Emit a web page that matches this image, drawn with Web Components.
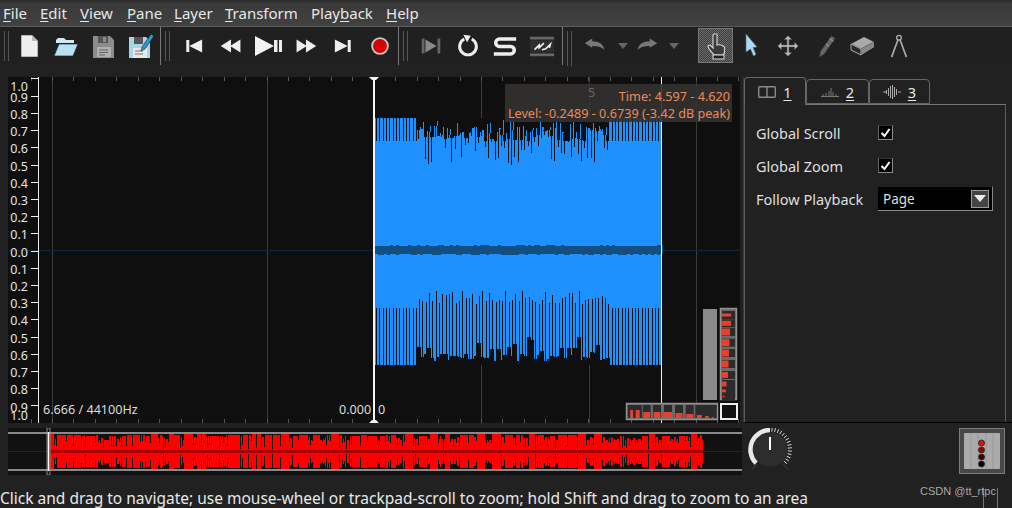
<!DOCTYPE html>
<html><head><meta charset="utf-8"><style>
html,body{margin:0;padding:0;background:#212121;width:1012px;height:508px;overflow:hidden}
body{font-family:"Noto Sans","Open Sans",sans-serif;color:#e6e6e6}
sv-app{display:flex}
</style></head><body>
<sv-app>
  <sv-menubar>
    <sv-menu style="--w:37px" key="F" rest="ile"></sv-menu><sv-menu style="--w:40px" key="E" rest="dit"></sv-menu><sv-menu style="--w:47px" key="V" rest="iew"></sv-menu><sv-menu style="--w:47px" key="P" rest="ane"></sv-menu><sv-menu style="--w:51px" key="L" rest="ayer"></sv-menu><sv-menu style="--w:86px" key="T" rest="ransform"></sv-menu><sv-menu style="--w:75px" pre="Play" key="b" rest="ack"></sv-menu><sv-menu style="--w:40px" key="H" rest="elp"></sv-menu>
  </sv-menubar>
  <sv-toolbar></sv-toolbar>
  <sv-main>
    <sv-pane></sv-pane>
    <sv-props></sv-props>
  </sv-main>
  <sv-bottom>
    <sv-overview></sv-overview>
    <sv-dial></sv-dial>
    <sv-leds></sv-leds>
  </sv-bottom>
  <sv-status>Click and drag to navigate; use mouse-wheel or trackpad-scroll to zoom; hold Shift and drag to zoom to an area</sv-status>
</sv-app>
<script>
function rng(s){return function(){s=(s*1664525+1013904223)>>>0;return s/4294967296}}
function def(name,html,init){
  customElements.define(name,class extends HTMLElement{
    constructor(){super();const r=this.attachShadow({mode:"open"});r.innerHTML=typeof html==="function"?html(this):html;}
    connectedCallback(){ if(init&&!this._i){this._i=1;init(this)} }
  });
}
def("sv-app",`<style>:host{display:flex;flex-direction:column;width:1012px;height:508px;overflow:hidden;background:#212121;position:relative}
.wm{position:absolute;left:920px;top:485px;font:11px "Liberation Sans",sans-serif;color:#a8a8a8}
.c{position:absolute;left:983px;top:488px;width:13px;height:20px;border-left:1px solid #777;border-right:1px solid #777}
</style><slot></slot><div class="c"></div><div class="wm">CSDN @tt_rtpc</div>`);

def("sv-menubar",`<style>:host{display:flex;height:26px;padding-left:3px;background:linear-gradient(#2b2b2b 0,#3a3a3a 4px,#414141 100%);box-sizing:border-box;align-items:center;flex:none}</style><slot></slot>`);
def("sv-menu",el=>`<style>:host{display:block;width:var(--w);font-size:15px;line-height:26px;color:#e8e8e8;white-space:nowrap}u{text-underline-offset:2px}</style>${el.getAttribute("pre")||""}<u>${el.getAttribute("key")}</u>${el.getAttribute("rest")}`);

const ICONS={
 new:`<path d="M6 3h11l6 6v16H6z" fill="#eee" stroke="#333" stroke-width=".6"/><path d="M17 3v6h6z" fill="#bbb"/>`,
 open:`<path d="M4 8l2-2h6l2 2h8v3H4z" fill="#cfe9f5"/><path d="M7 12h19l-5 12H2z" fill="#b8e2f2" stroke="#222" stroke-width=".7"/>`,
 save:`<path d="M4 4h17l4 4v18H4z" fill="#8c8c8c"/><rect x="9" y="4" width="10" height="7" fill="#555"/><rect x="14" y="5" width="3" height="5" fill="#8c8c8c"/><rect x="8" y="15" width="14" height="10" fill="#b0b0b0"/><path d="M10 18h9M10 20.500h9M10 23h6" stroke="#666"/>`,
 saveas:`<path d="M3 5h17l4 4v17H3z" fill="#a9d5e8"/><rect x="8" y="5" width="9" height="7" fill="#555"/><rect x="7" y="16" width="14" height="10" fill="#e8e8e8"/><path d="M9 19h8M9 22h8" stroke="#777"/><path d="M25 2l3 2-9 13-4 2 1-4z" fill="#2d98c8" stroke="#111" stroke-width=".5"/>`,
 first:`<rect x="5" y="7" width="3.500" height="14" fill="#eee"/><path d="M8.500 14l15-7.500v15z" fill="#eee"/>`,
 rew:`<path d="M2 14l12-7.500v15z M13 14l12-7.500v15z" fill="#eee"/>`,
 play:`<path d="M1 4l19 10L1 24z" fill="#f2f2f2"/><rect x="20" y="8" width="3.500" height="12" fill="#eee"/><rect x="25" y="8" width="3.500" height="12" fill="#eee"/>`,
 ffw:`<path d="M3 6.500l12 7.500-12 7.500z M14 6.500l12 7.500-12 7.500z" fill="#eee"/>`,
 last:`<path d="M4.500 6.500l15 7.500-15 7.500z" fill="#eee"/><rect x="19.500" y="7" width="3.500" height="14" fill="#eee"/>`,
 rec:`<circle cx="14" cy="14" r="9.500" fill="#c8c8c8"/><circle cx="14" cy="14" r="7.500" fill="#d80000"/>`,
 sel:`<rect x="4" y="6" width="3" height="16" fill="#666"/><rect x="21" y="6" width="3" height="16" fill="#666"/><path d="M8 7l12 7-12 7z" fill="#8a8a8a"/>`,
 loop:`<path d="M10 6.500a9 9 0 1 0 8 0" fill="none" stroke="#eee" stroke-width="3.200"/><path d="M9 2l8 1-4 7z" fill="#eee"/>`,
 solo:`<path d="M26 6.500H8a3.500 3.500 0 0 0 0 8h12a3.500 3.500 0 0 1 0 8H2" fill="none" stroke="#eee" stroke-width="3.800"/>`,
 align:`<rect x="1" y="4" width="26" height="3" fill="#666"/><rect x="1" y="22" width="26" height="3" fill="#666"/><rect x="1" y="8" width="26" height="13" fill="#2e2e2e"/><path d="M6 18l5-5v3l5-5M14 18l4-1 5-5-1 4" fill="none" stroke="#eee" stroke-width="1.800"/>`,
 undo:`<path d="M3 11l8-5v3c7 0 12 3 13 9-3-3-7-4-13-4v2z" fill="#777"/>`,
 redo:`<path d="M25 11l-8-5v3C10 9 5 12 4 18c3-3 7-4 13-4v2z" fill="#777"/>`,
 nav:`<path d="M12 2h3v11l2-.5 2 .5 2 1 1.500 1v6l-2 2H12l-5-6-1-3 2-1 3 3V3z" fill="#3a3a3a" stroke="#ccc" stroke-width="1.200"/><rect x="11" y="23" width="11" height="4" fill="#222" stroke="#ddd"/>`,
 select:`<path d="M9 2l11 13-4 .5 3 7-2.500 1.500-3-7L9 20z" fill="#a8dbef" stroke="#666" stroke-width=".6"/>`,
 move:`<path d="M14 3l4 4h-3v6h6v-3l4 4-4 4v-3h-6v6h3l-4 4-4-4h3v-6H7v3l-4-4 4-4v3h6V7h-3z" fill="#bdbdbd" stroke="#555" stroke-width=".5"/>`,
 draw:`<path d="M21 3l4 3-12 17-5 3 1-6z" fill="#666" stroke="#333" stroke-width=".6"/><path d="M19 6l4 3M15 12l3 2" stroke="#aaa"/>`,
 erase:`<path d="M3 12L16 5l10 5v5L13 23 3 18z" fill="#aaa"/><path d="M3 12l10 5 13-7M13 17v6" fill="none" stroke="#444"/><path d="M3 12v6l10 5v-6z" fill="#2a2a2a" stroke="#aaa"/><path d="M13 17L26 10v5L13 23z" fill="#888"/>`,
 measure:`<circle cx="14" cy="5" r="2.500" fill="none" stroke="#aaa" stroke-width="1.500"/><path d="M13 7L6 26M15 7l7 19" stroke="#aaa" stroke-width="1.800" fill="none"/>`
};
def("sv-icon",el=>{const s=el.getAttribute("size")||28;return `<style>:host{display:block;line-height:0}</style><svg width="${s}" height="${s}" viewBox="0 0 28 28">${ICONS[el.getAttribute("name")]}</svg>`});
def("sv-tool",el=>{const a=el.hasAttribute("active");return `<style>:host{display:flex;flex:none;width:${el.getAttribute("w")||37}px;height:35px;align-items:center;justify-content:center;box-sizing:border-box;${a?"background:repeating-conic-gradient(#3d3d3d 0 25%,#6a6a6a 0 50%) 0 0/2px 2px;border:1px solid #777;":""}}</style><slot></slot>`});
def("sv-dd",`<style>:host{display:flex;flex:none;width:13px;height:35px;align-items:center;justify-content:center}i{border:5.500px solid transparent;border-top:6px solid #666;border-bottom:0}</style><i></i>`);
def("sv-tgroup",`<style>:host{display:flex;flex:none;box-sizing:border-box;height:39px;padding:1px 0 0 var(--pad,13px);border-top:1px solid #5c5c5c;border-right:1px solid #777;position:relative}
.h{position:absolute;left:4px;top:4px;bottom:4px;width:3px;border-left:1px solid #555;border-right:1px solid #555}</style><div class="h"></div><slot></slot>`);
def("sv-toolbar",`<style>:host{display:flex;flex:none;height:39px;margin-bottom:12px;background:#202020}
.rest{flex:1;border-top:1px solid #5c5c5c}</style>
<sv-tgroup style="width:161px;--pad:10px">
 <sv-tool><sv-icon name="new"></sv-icon></sv-tool><sv-tool><sv-icon name="open"></sv-icon></sv-tool><sv-tool><sv-icon name="save"></sv-icon></sv-tool><sv-tool><sv-icon name="saveas"></sv-icon></sv-tool>
</sv-tgroup>
<sv-tgroup style="width:238px;--pad:14px">
 <sv-tool><sv-icon name="first" size="24"></sv-icon></sv-tool><sv-tool><sv-icon name="rew" size="24"></sv-icon></sv-tool><sv-tool w="38"><sv-icon name="play"></sv-icon></sv-tool><sv-tool><sv-icon name="ffw" size="24"></sv-icon></sv-tool><sv-tool><sv-icon name="last" size="24"></sv-icon></sv-tool><sv-tool><sv-icon name="rec" size="26"></sv-icon></sv-tool>
</sv-tgroup>
<sv-tgroup style="width:164px;--pad:13px">
 <sv-tool><sv-icon name="sel" size="26"></sv-icon></sv-tool><sv-tool><sv-icon name="loop" size="26"></sv-icon></sv-tool><sv-tool><sv-icon name="solo" size="26"></sv-icon></sv-tool><sv-tool><sv-icon name="align" size="26"></sv-icon></sv-tool>
</sv-tgroup>
<div class="rest"><sv-tgroup-inner></sv-tgroup-inner></div>`);
def("sv-tgroup-inner",`<style>:host{display:flex;position:relative;padding:1px 0 0 14px;height:35px}
.h{position:absolute;left:4px;top:4px;bottom:-3px;width:3px;border-left:1px solid #555;border-right:1px solid #555}
sv-tool+sv-dd{margin-left:3px}</style><div class="h"></div>
<sv-tool w="36"><sv-icon name="undo" size="26"></sv-icon></sv-tool><sv-dd></sv-dd><sv-tool w="35"><sv-icon name="redo" size="26"></sv-icon></sv-tool><sv-dd></sv-dd>
<sv-tool w="35" active style="margin-left:18px"><sv-icon name="nav"></sv-icon></sv-tool>
<sv-tool w="36"><sv-icon name="select"></sv-icon></sv-tool><sv-tool><sv-icon name="move" size="26"></sv-icon></sv-tool><sv-tool><sv-icon name="draw" size="26"></sv-icon></sv-tool><sv-tool w="38"><sv-icon name="erase"></sv-icon></sv-tool><sv-tool w="36"><sv-icon name="measure" size="26"></sv-icon></sv-tool>`);

def("sv-main",`<style>:host{display:flex;flex:none;height:346px;padding-left:8px;gap:3px}</style><slot></slot>`);

function buildWave(){
  const r=rng(77);let s="";
  const tick=(x,y1,y2,c)=>`<path d="M${x}.5 ${y1}V${y2}" stroke="${c}"/>`;
  [52,267,481,589,696].forEach(x=>s+=tick(x,77,423,"#3c3c3c"));
  for(let i=-1;i<33;i++){const x=Math.round(30.5+i*21.45+21.5);if(x<31||x>738)continue;s+=tick(x,77,81,"#555")+tick(x,419,423,"#555")}
  s+=`<path d="M9 250.500H740" stroke="#10243a"/>`;
  s+=`<rect x="375" y="118" width="286" height="247" fill="#1e90ff"/>`;
  let dk="";
  const bg="#0f0f0f";
  let tops="";
  for(let x=375;x<661;x+=3.32){
    const xx=Math.round(x)+1, mid=x>417&&x<608;
    if(!mid){dk+=`M${xx}.5 118V141`;}
    else{
      const top=126+Math.floor(r()*16);
      s+=`<rect x="${xx-2}" y="118" width="4" height="${top-118}" fill="${bg}"/>`;
      if(r()<.75){const t=120+Math.floor(r()*14);tops+=`M${xx+1}.5 ${t}V${top}`}
      const y2=r()<.4?150+r()*16:top+r()*14;
      dk+=`M${xx-1}.5 ${top}V${y2|0}`;
    }
  }
  s+=`<path d="${tops}" stroke="#1e90ff"/>`;
  for(let x=375;x<661;x+=3.32){
    const xx=Math.round(x)+1, mid=x>417&&x<608;
    if(!mid){dk+=`M${xx}.5 308V365`;}
    else{
      const q=r();const h=q<.22?16+r()*12:q<.5?8+r()*10:3+r()*6;
      s+=`<rect x="${xx-2}" y="${(365-h)|0}" width="4" height="${(h|0)+1}" fill="${bg}"/>`;
      dk+=`M${xx}.5 ${(291+r()*14)|0}V365`;
    }
  }
  s+=`<path d="${dk}" stroke="#111"/>`;
  s+=`<rect x="375" y="246" width="286" height="8" fill="#124f80"/>`;
  for(let x=375;x<661;x+=3){const a=r()<.4?1:0;s+=`<rect x="${x}" y="${246-a}" width="3" height="${8+a+(r()<.4?1:0)}" fill="#124f80"/>`}
  s+=tick(373,77,423,"#f4f4f4")+tick(374,77,423,"#f4f4f4")+tick(661,77,423,"#f4f4f4");
  s+=`<path d="M369 77h10l-3 3h-4zM369 423h10l-3-3h-4z" fill="#f4f4f4"/>`;
  s+=tick(38,77,423,"#eee");
  s+=`<path d="M31 78.500h7" stroke="#eee"/>`;
  const lab=[];
  for(let i=-9;i<=9;i++){const y=Math.round(250.5+i*17.2);s+=`<path d="M31 ${y+.5}h7" stroke="#eee"/>`;
    const v=(Math.abs(i)/10).toFixed(1);let by=y+6;if(i==-9)by=102;if(i==9)by=412;lab.push([v,by])}
  lab.push(["1.0",91],["1.0",420]);
  s+=`<g font-family="Noto Sans" font-size="12.500" fill="#e4e4e4" text-anchor="end">`+lab.map(l=>`<text x="28" y="${l[1]}">${l[0]}</text>`).join("")+`</g>`;
  return s;
}
function meterV(){
 let s=`<rect x="703" y="309" width="14" height="91" fill="#8a8a8a"/><rect x="720.500" y="308.500" width="16" height="91" fill="#6a6a6a" stroke="#909090" stroke-width="1.500"/>`;
 const ys=[315,323.3,332,342.7,353,364,375,384,391,396.700],ws=[9,9,8,7.500,7,6.500,6,4.500,4,3],hs=[3,5,7,7,7,7,6,5,3,1];
 ys.forEach((c,i)=>{s+=`<rect x="722" y="${c-4}" width="13" height="8" fill="#2b2b2b"/><rect x="722" y="${c-hs[i]/2}" width="${ws[i]}" height="${hs[i]}" fill="#e8402e"/>`});
 s+=`<rect x="626.500" y="403.500" width="91" height="16" fill="#6a6a6a" stroke="#909090" stroke-width="1.500"/>`;
 const xs=[631.7,637.7,646.7,657,668,679,689.7,699.3,707,712.700],bw=[3,4,7,7,8,7,7,5,4,2],bh=[8,8,6,6,6,5,4,3,2,1];
 xs.forEach((c,i)=>{s+=`<rect x="${c-4}" y="405" width="8" height="13" fill="#2b2b2b"/><rect x="${c-bw[i]/2}" y="${418-bh[i]}" width="${bw[i]}" height="${bh[i]}" fill="#e8402e"/>`});
 s+=`<rect x="721" y="404" width="16" height="15" fill="#111" stroke="#eee" stroke-width="2"/>`;
 return s}
def("sv-pane",`<style>:host{display:block;position:relative;flex:none;width:732px;height:346px;background:#0f0f0f;font-size:12.600px;overflow:hidden}
svg{display:block}
.t{position:absolute;white-space:nowrap;color:#dcdcdc;line-height:16px}
.tip{position:absolute;left:497px;top:7px;width:227px;height:38px;box-sizing:border-box;padding:4px 2px 0 0;background:rgba(52,50,49,.9);color:#ea8c5a;text-align:right;line-height:17px;white-space:nowrap;font-size:12.650px}
.five{position:absolute;left:580px;top:8px;color:#666}
</style><svg id="s" width="732" height="346" viewBox="8 77 732 346"></svg>
<div class="tip">Time: 4.597 - 4.620<br>Level: -0.2489 - 0.6739 (-3.42 dB peak)</div>
<div class="t five">5</div>
<div class="t" style="left:35px;top:325px">6.666 / 44100Hz</div>
<div class="t" style="left:331px;top:325px">0.000</div>
<div class="t" style="left:370px;top:325px">0</div>`,el=>{el.shadowRoot.getElementById("s").innerHTML=buildWave()+meterV()});

def("sv-check",`<style>:host{display:block;width:15px;height:15px;box-sizing:border-box;background:#000;border-right:1px solid #8a8a8a;border-bottom:1px solid #8a8a8a;border-left:1px solid #666;border-top:1px solid #333;line-height:0}</style><svg width="13" height="13" viewBox="0 0 13 13"><path d="M2.500 7l3 3 5-7" fill="none" stroke="#fff" stroke-width="2"/></svg>`);
def("sv-tab",el=>{const a=el.hasAttribute("active");return `<style>:host{display:flex;box-sizing:border-box;flex:none;width:var(--w);height:${a?28:25}px;margin-top:${a?0:2}px;${a?"margin-bottom:-1px;z-index:1;":""}align-items:center;justify-content:center;gap:7px;border:1px solid #666;border-bottom:${a?"0":"1px solid #666"};border-radius:4px 4px 0 0;background:#212121;font-size:14.500px;color:#e8e8e8;position:relative}
u{text-underline-offset:2px}svg{display:block}</style><slot></slot><u>${el.getAttribute("n")}</u>`});
def("sv-props",`<style>:host{display:block;flex:1;box-sizing:border-box;border-left:1px solid #3a3a3a;border-bottom:1px solid #000;padding-right:7px;font-size:14.500px;color:#dfdfdf}
.tabs{display:flex;height:27px;margin-left:0}
.body{box-sizing:border-box;height:318px;border:1px solid #5c5c5c;border-top:1px solid #777;border-bottom:0;padding:16px 12px 0 11px;display:grid;grid-template-columns:122px 115px;grid-auto-rows:33px;align-items:start;margin-right:0}
.l{line-height:25px;white-space:nowrap}
.ck{padding-top:4px}
.combo{box-sizing:border-box;height:25px;background:#000;display:flex;align-items:center;justify-content:space-between;padding:0 3px 0 5px;border-right:1px solid #888;border-bottom:1px solid #888;border-top:1px solid #222;margin-top:-1px;font-size:13.500px}
.btn{width:18px;height:18px;box-sizing:border-box;background:#444;border:1px solid #999;display:flex;align-items:center;justify-content:center}
.btn i{border:6px solid transparent;border-top:7px solid #eee;border-bottom:0}
</style>
<div class="tabs">
<sv-tab active n="1" style="--w:62px"><svg width="18" height="12" viewBox="0 0 18 12"><rect x=".7" y=".7" width="16.600" height="10.600" rx="1" fill="none" stroke="#8a8a8a" stroke-width="1.400"/><path d="M9 1v10" stroke="#8a8a8a" stroke-width="1.400"/></svg></sv-tab>
<sv-tab n="2" style="--w:63px"><svg width="18" height="11" viewBox="0 0 18 11"><path d="M0 10.500h18M2 10V8M5 10V7M8 10V5M10 10V2M12 10V6M15 10V8" stroke="#777" fill="none"/></svg></sv-tab>
<sv-tab n="3" style="--w:61px"><svg width="18" height="14" viewBox="0 0 18 14"><path d="M0 7h3M3.500 5v4M5.500 3v8M7.500 1v12M9.500 0v14M11.500 2v10M13.500 4v6M15 7h3" stroke="#aaa" fill="none"/></svg></sv-tab>
</div>
<div class="body">
<div class="l">Global Scroll</div><div class="ck"><sv-check></sv-check></div>
<div class="l">Global Zoom</div><div class="ck"><sv-check></sv-check></div>
<div class="l">Follow Playback</div><div class="combo"><span>Page</span><span class="btn"><i></i></span></div>
</div>`);

def("sv-bottom",`<style>:host{display:flex;flex:none;height:60px;padding:5px 7px 0 8px;box-sizing:border-box;align-items:flex-start}</style><slot></slot>`);
def("sv-overview",`<style>:host{display:block;flex:none;width:734px;height:47px;background:#111;line-height:0}</style><svg id="s" width="734" height="47" viewBox="8 428 734 47"></svg>`,el=>{
 const r=rng(19);let s=`<path d="M8 451.500H742" stroke="#7a0000"/><rect x="8" y="432" width="734" height="2" fill="#8a8a8a"/><rect x="8" y="469" width="734" height="2" fill="#8a8a8a"/>`;
 let x=50;
 while(x<703){
  const big=r()<.35;
  const w=Math.min(big?4+Math.floor(r()*6):1+Math.floor(r()*2),703-x);
  const h=big?(15+r()*3)|0:(11+r()*6)|0;
  s+=`<rect x="${x}" y="${451-h}" width="${w}" height="${h*2+1}" fill="#f00"/>`;
  x+=w;
  if(x<702&&r()<.8){const nh=r()<.5?2+(r()*5|0):8+(r()*4|0);s+=`<rect x="${x}" y="${451-nh}" width="1" height="${nh*2+1}" fill="#f00"/>`;x+=1}
 }
 s+=`<rect x="50" y="450" width="653" height="3" fill="#a80000"/>`;
 s+=`<rect x="47" y="428" width="3" height="47" fill="none" stroke="#8a8a8a"/><path d="M48.500 432V471" stroke="#fff" stroke-width="1.500"/>`;
 el.shadowRoot.getElementById("s").innerHTML=s});
def("sv-dial",`<style>:host{display:block;flex:none;width:56px;height:56px;margin-left:-1px;line-height:0}</style><svg id="s" width="56" height="56" viewBox="0 0 56 56"></svg>`,el=>{
 let s="";const C=[29,21.500];
 const p=(a,r)=>[(C[0]+Math.sin(a)*r).toFixed(1),(C[1]-Math.cos(a)*r).toFixed(1)];
 const a0=-2.350,a1=0;const [x0,y0]=p(a0,19.500),[x1,y1]=p(a1,19.500);
 s+=`<path d="M${p(-2.4,19)} L${p(-2.4,27)}M${p(2.4,19)} L${p(2.4,27)}" stroke="#444"/>`;
 s+=`<circle cx="29" cy="21.500" r="17" fill="#2d2d2d"/>`;
 s+=`<path d="M${x0} ${y0}A19.500 19.500 0 0 1 ${x1} ${y1}" fill="none" stroke="#e8e8e8" stroke-width="4.500"/>`;
 for(let a=.1;a<2.4;a+=.155){s+=`<path d="M${p(a,18)} L${p(a,22)}" stroke="#d8d8d8"/>`}
 s+=`<path d="M29 9V22" stroke="#fff" stroke-width="2"/>`;
 el.shadowRoot.getElementById("s").innerHTML=s});
def("sv-leds",`<style>:host{display:flex;flex:none;margin-left:auto;width:46px;height:46px;box-sizing:border-box;background:#484848;border:1px solid #7c7c7c;align-items:center;justify-content:center;line-height:0}</style>
<svg width="36" height="36" viewBox="0 0 36 36"><rect width="36" height="36" rx="1" fill="#ababab"/><path d="M7 0v36M14 0v36M22 0v36M29 0v36" stroke="#9a9a9a"/><circle cx="17.500" cy="10" r="3" fill="#f00" stroke="#333"/><circle cx="17.500" cy="17" r="3" fill="#900" stroke="#333"/><circle cx="17.500" cy="24" r="3" fill="#400" stroke="#333"/><circle cx="17.500" cy="31" r="3" fill="#000" stroke="#333"/></svg>`);
def("sv-status",`<style>:host{display:block;flex:none;height:17px;padding-top:3px;font-size:15.500px;line-height:24px;color:#e8e8e8;white-space:nowrap}</style><slot></slot>`);
</script>
</body></html>
